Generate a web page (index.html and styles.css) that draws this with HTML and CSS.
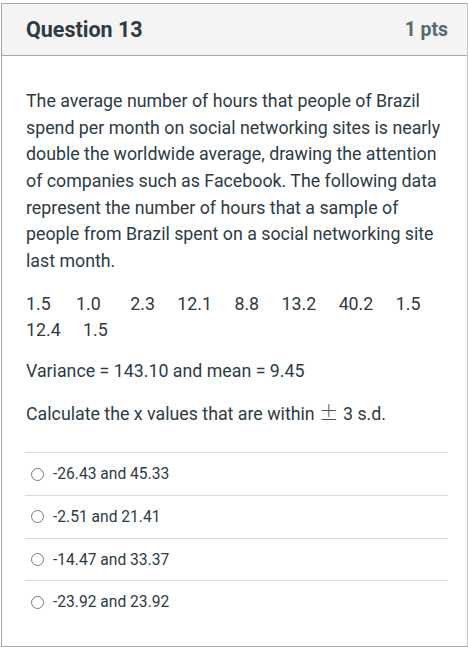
FILE: index.html
```html
<!DOCTYPE html>
<html>
<head>
<meta charset="utf-8">
<link rel="stylesheet" href="styles.css">
</head>
<body>
<div class="card">
  <div class="header">
    <div class="title">Question 13</div>
    <div class="pts">1 pts</div>
  </div>
  <div class="body">
    <p class="para first">The average number of hours that people of Brazil spend per month on social networking sites is nearly double the worldwide average, drawing the attention of companies such as Facebook. The following data represent the number of hours that a sample of people from Brazil spent on a social networking site last month.</p>
    <p class="para nums"><span>1.5</span> <span>1.0</span> <span>2.3</span> <span>12.1</span> <span>8.8</span> <span>13.2</span> <span>40.2</span> <span>1.5</span> <span>12.4</span> <span>1.5</span></p>
    <p class="para">Variance = 143.10 and mean = 9.45</p>
    <p class="para">Calculate the x values that are within <span class="pm">±</span> 3 s.d.</p>
    <div class="answers">
      <label class="answer"><span class="radio"></span><span class="atext">-26.43 and 45.33</span></label>
      <label class="answer"><span class="radio"></span><span class="atext">-2.51 and 21.41</span></label>
      <label class="answer"><span class="radio"></span><span class="atext">-14.47 and 33.37</span></label>
      <label class="answer"><span class="radio"></span><span class="atext">-23.92 and 23.92</span></label>
    </div>
  </div>
</div>
</body>
</html>
```

FILE: styles.css
```css
html, body {
  margin: 0;
  padding: 0;
  background: #ffffff;
}
body {
  font-family: Roboto, "Liberation Sans", sans-serif;
  color: #2d3b45;
}
.card {
  box-sizing: border-box;
  margin: 3px 0 0 1px;
  width: 467px;
  height: 644px;
  border: 1px solid #a8a8a8;
  border-right: 1px solid #c4c4c4;
}
.header {
  box-sizing: border-box;
  height: 52px;
  background: #f4f4f4;
  border-bottom: 1px solid #a8a8a8;
  display: flex;
  align-items: center;
  justify-content: space-between;
  padding: 0 19px 0 24px;
}
.title {
  font-size: 21.5px;
  font-weight: 700;
  color: #2d3b45;
}
.pts {
  font-size: 19.4px;
  font-weight: 700;
  color: #5b6770;
}
.body {
  padding: 32px 19px 0 23px;
}
.para {
  margin: 0 0 14px 1px;
  font-size: 17.8px;
  line-height: 26.67px;
}
.para.first {
  margin-bottom: 16px;
}
.nums span {
  margin-right: 18px;
}
.nums span:nth-child(1) {
  margin-right: 21px;
}
.nums span:nth-child(2) {
  margin-right: 25px;
}
.pm {
  font-family: "Noto Sans CJK SC", sans-serif;
  font-weight: 300;
  color: #555;
  font-size: 19.5px;
}
.answers {
  margin-top: 25px;
  display: flex;
  flex-direction: column;
}
.answer {
  display: flex;
  align-items: center;
  height: 42.7px;
  border-top: 1px solid #dadada;
  box-sizing: border-box;
  padding-left: 6px;
  font-size: 15.6px;
  color: #2d3b45;
}
.radio {
  box-sizing: border-box;
  width: 13px;
  height: 13px;
  border: 1px solid #7a7a7a;
  border-radius: 50%;
  margin-right: 9px;
  flex: none;
}
```
